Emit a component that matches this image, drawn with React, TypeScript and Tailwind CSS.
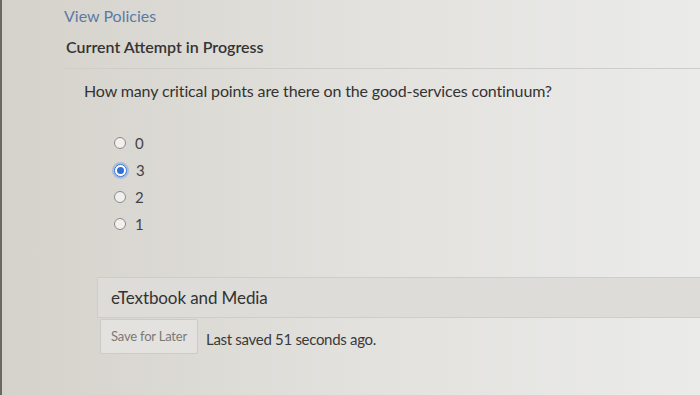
import React from "react";

const options = [
  { label: "0", checked: false },
  { label: "3", checked: true },
  { label: "2", checked: false },
  { label: "1", checked: false },
];

function Radio({ checked }: { checked: boolean }) {
  if (checked) {
    return (
      <span className="flex h-[13px] w-[13px] items-center justify-center rounded-full border border-[#3b78d8] bg-white shadow-[0_0_0_2px_rgba(80,140,230,0.35)]">
        <span className="h-[7px] w-[7px] rounded-full bg-[#2f6fd6]" />
      </span>
    );
  }
  return <span className="h-[12px] w-[12px] rounded-full border border-[#8a8a88] bg-[#f1f0ee]" />;
}

export default function App() {
  return (
    <div
      className="flex h-[395px] w-[700px] overflow-hidden border-l-[2px] border-[#6a6863] bg-gradient-to-r from-[#d5d2cb] via-[#e2e1dd] to-[#ebebea] text-[#333] [font-family:Lato,'Open_Sans',sans-serif]"
    >
      <div className="flex flex-1 flex-col pt-[5px]">
        <div className="pl-[62px] text-[16px] leading-[22px] text-[#5d7aa6]">View Policies</div>
        <div className="mt-[9px] pl-[64px] text-[16px] font-semibold leading-[22px] text-[#343434]">
          Current Attempt in Progress
        </div>
        <div className="ml-[62px] mt-[10px] border-t border-[#cfcdc9]" />
        <div className="mt-[11px] pl-[82px] text-[16px] leading-[22px] tracking-[-0.13px] text-[#333]">
          How many critical points are there on the good-services continuum?
        </div>
        <div className="mt-[32px] flex flex-col gap-[9px] pl-[112px]">
          {options.map((o) => (
            <label key={o.label} className="flex h-[18px] items-center gap-[9px] text-[15px] text-[#444]">
              <Radio checked={o.checked} />
              <span>{o.label}</span>
            </label>
          ))}
        </div>
        <div className="ml-[95px] mt-[44px] flex h-[41px] items-center border border-r-0 border-[#cfcdc8] bg-[#dedcd8] pl-[13px] text-[17px] tracking-[-0.1px] text-[#333]">
          eTextbook and Media
        </div>
        <div className="ml-[98px] mt-[1px] flex items-center gap-[8px]">
          <div className="flex h-[35px] items-center rounded-[2px] border border-[#cdcbc6] bg-[#e4e2de] px-[10px] text-[13px] tracking-[-0.2px] text-[#7a7976]">
            Save for Later
          </div>
          <span className="pt-[5px] text-[15px] tracking-[-0.3px] text-[#3a3a3a]">Last saved 51 seconds ago.</span>
        </div>
      </div>
    </div>
  );
}
